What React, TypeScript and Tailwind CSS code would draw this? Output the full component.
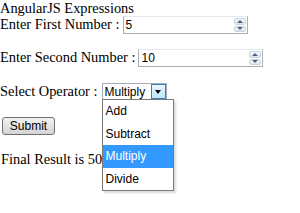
import React from "react";

const serif = { fontFamily: '"Liberation Serif", "Times New Roman", serif' };

function Spinner() {
  return (
    <div className="flex h-full w-[14px] flex-col gap-px p-px">
      <div className="flex flex-1 items-center justify-center rounded-[2px] border border-[#c9d3df] bg-gradient-to-b from-[#f4f7fb] to-[#dfe6ee]">
        <div className="h-0 w-0 border-x-[3px] border-b-[3px] border-x-transparent border-b-[#4d6185]" />
      </div>
      <div className="flex flex-1 items-center justify-center rounded-[2px] border border-[#c9d3df] bg-gradient-to-b from-[#f4f7fb] to-[#dfe6ee]">
        <div className="h-0 w-0 border-x-[3px] border-t-[3px] border-x-transparent border-t-[#4d6185]" />
      </div>
    </div>
  );
}

function NumberBox({ value }: { value: string }) {
  return (
    <div className="flex h-[18px] w-[125px] items-center border border-[#abadb3] border-t-[#e3e9ef] bg-white">
      <span className="flex-1 pl-[2px] text-[12px] leading-none text-black [font-family:'Liberation_Sans',sans-serif]">{value}</span>
      <Spinner />
    </div>
  );
}

const OPTIONS = ["Add", "Subtract", "Multiply", "Divide"];

export default function App() {
  return (
    <div className="relative h-[213px] w-[300px] bg-white text-[14.4px] text-black" style={serif}>
      <div className="h-[16px] leading-[16px]">AngularJS Expressions</div>

      <div className="flex h-[18px] items-center">
        <span className="mr-[3px]">Enter First Number :</span>
        <NumberBox value="5" />
      </div>

      <div className="mt-[15px] flex h-[18px] items-center">
        <span className="mr-[3px]">Enter Second Number :</span>
        <NumberBox value="10" />
      </div>

      <div className="mt-[16px] flex h-[17px] items-center">
        <span className="mr-[4px]">Select Operator :</span>
        <div className="relative flex h-[17px] w-[65px] items-center border border-[#a5acb5] bg-white">
          <span className="flex-1 pl-[2px] text-[12px] leading-none [font-family:'Liberation_Sans',sans-serif]">Multiply</span>
          <div className="flex h-[15px] w-[15px] items-center justify-center border border-[#3c7fb1] bg-gradient-to-b from-[#eaf6fd] to-[#bee6fd]">
            <div className="h-0 w-0 border-x-[3px] border-t-[4px] border-x-transparent border-t-black" />
          </div>
          <div className="absolute left-[-1px] top-[15px] z-10 w-[72px] border border-[#7a7a7a] bg-white shadow-[2px_2px_2px_rgba(0,0,0,0.15)] [font-family:'Liberation_Sans',sans-serif]">
            {OPTIONS.map((o) => (
              <div
                key={o}
                className={
                  "flex h-[22.5px] items-center pl-[3px] text-[12px] " +
                  (o === "Multiply" ? "bg-[#3399ff] text-white" : "text-black")
                }
              >
                {o}
              </div>
            ))}
          </div>
        </div>
      </div>

      <div className="mt-[17px] pl-[2px]">
        <button className="flex h-[18px] w-[53px] items-center justify-center rounded-[3px] border border-[#707070] bg-gradient-to-b from-[#f2f2f2] to-[#d5d5d5] text-[12px] [font-family:'Liberation_Sans',sans-serif]">
          Submit
        </button>
      </div>

      <div className="mt-[15px] pl-px leading-[18px]">Final Result is 50</div>
    </div>
  );
}
